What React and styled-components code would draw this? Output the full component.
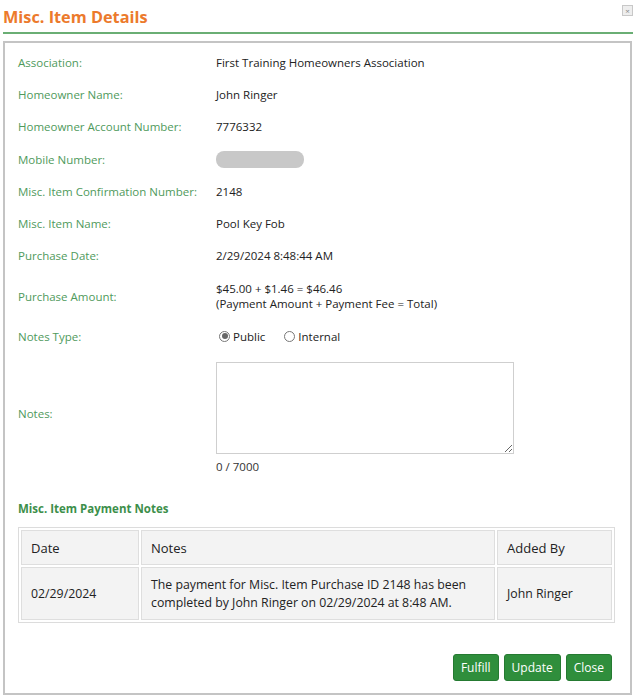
import React, { useState } from "react";
import styled, { createGlobalStyle } from "styled-components";

const GlobalStyle = createGlobalStyle`
  body {
    margin: 0;
    background: #fff;
    font-family: "Open Sans", "Noto Sans", sans-serif;
    font-size: 11.5px;
    color: #222;
  }
`;

const Dialog = styled.div`
  width: 635px;
  height: 697px;
  box-sizing: border-box;
  padding: 0 2px 2px 3px;
  display: flex;
  flex-direction: column;
`;

const TitleBar = styled.div`
  display: flex;
  align-items: flex-start;
  justify-content: space-between;
  height: 34px;
  border-bottom: 2px solid #6aae74;
  box-sizing: border-box;
`;

const Title = styled.h1`
  margin: 6px 0 0 0;
  font-size: 16.3px;
  font-weight: 700;
  color: #ec7a2c;
`;

const CloseIcon = styled.span`
  margin-top: 5px;
  width: 9px;
  height: 9px;
  border: 1px solid #c8c8c8;
  background: #eee;
  color: #888;
  font-size: 8px;
  line-height: 9px;
  text-align: center;
`;

const Panel = styled.div`
  margin-top: 7px;
  margin-right: 1px;
  flex: 1;
  border: 2px solid #c4c4c4;
  padding: 3px 17px 12px 13px;
  display: flex;
  flex-direction: column;
`;

const Row = styled.div`
  display: grid;
  grid-template-columns: 198px 1fr;
  align-items: center;
  min-height: ${(p) => p.$h || 32.3}px;
`;

const Label = styled.div`
  color: #4f9a5c;
`;

const Value = styled.div`
  color: #222;
  line-height: 15px;
`;

const Blur = styled.div`
  width: 88px;
  height: 17px;
  border-radius: 8px;
  background: #c8c8c8;
`;

const Radios = styled.div`
  display: flex;
  align-items: center;
  gap: 19px;
  margin-left: 3px;
`;

const RadioOpt = styled.label`
  display: flex;
  align-items: center;
  gap: 3px;
  color: #222;
`;

const Dot = styled.span`
  width: 11px;
  height: 11px;
  border-radius: 50%;
  border: 1px solid #777;
  box-sizing: border-box;
  position: relative;
  display: inline-block;
  background: #fff;
  &::after {
    content: "";
    display: ${(p) => (p.$on ? "block" : "none")};
    position: absolute;
    inset: 1.5px;
    border-radius: 50%;
    background: #666;
  }
`;

const NotesBlock = styled.div`
  display: flex;
  flex-direction: column;
  gap: 5px;
  padding-top: 10px;
`;

const Textarea = styled.textarea`
  width: 298px;
  height: 92px;
  box-sizing: border-box;
  border: 1px solid #cfcfcf;
  font-family: inherit;
  font-size: 12px;
  margin: 0;
`;

const Counter = styled.div`
  color: #333;
`;

const SectionTitle = styled.div`
  margin-top: 27px;
  font-weight: 700;
  color: #3d8f4b;
`;

const Table = styled.table`
  margin-top: 11px;
  width: 597px;
  border: 1px solid #dcdcdc;
  border-collapse: separate;
  border-spacing: 2px;
  font-size: 12px;
`;

const Th = styled.th`
  text-align: left;
  font-weight: 500;
  font-size: 13px;
  background: #f3f3f3;
  border: 1px solid #dedede;
  padding: 0 9px;
  height: 33px;
  width: ${(p) => p.$w}px;
`;

const Td = styled.td`
  background: #f3f3f3;
  border: 1px solid #dedede;
  padding: 0 9px;
  height: 51px;
  line-height: 18px;
  font-size: 12.3px;
`;

const Footer = styled.div`
  margin-top: auto;
  display: flex;
  justify-content: flex-end;
  gap: 5px;
  padding-right: 1px;
`;

const Button = styled.button`
  background: #2f8e3c;
  color: #fff;
  border: 1px solid #257a31;
  border-radius: 3px;
  font-family: inherit;
  font-size: 12px;
  height: 27px;
  padding: 0 7px;
`;

const fields = [
  ["Association:", "First Training Homeowners Association"],
  ["Homeowner Name:", "John Ringer"],
  ["Homeowner Account Number:", "7776332"],
  ["Mobile Number:", null],
  ["Misc. Item Confirmation Number:", "2148"],
  ["Misc. Item Name:", "Pool Key Fob"],
  ["Purchase Date:", "2/29/2024 8:48:44 AM"],
];

export default function App() {
  const [type, setType] = useState("public");
  const [notes, setNotes] = useState("");

  return (
    <>
      <GlobalStyle />
      <Dialog>
        <TitleBar>
          <Title>Misc. Item Details</Title>
          <CloseIcon>×</CloseIcon>
        </TitleBar>
        <Panel>
          {fields.map(([label, value]) => (
            <Row key={label}>
              <Label>{label}</Label>
              {value === null ? <Blur /> : <Value>{value}</Value>}
            </Row>
          ))}
          <Row $h={48}>
            <Label>Purchase Amount:</Label>
            <Value>
              $45.00 + $1.46 = $46.46
              <br />
              (Payment Amount + Payment Fee = Total)
            </Value>
          </Row>
          <Row>
            <Label>Notes Type:</Label>
            <Radios>
              <RadioOpt onClick={() => setType("public")}>
                <Dot $on={type === "public"} />
                Public
              </RadioOpt>
              <RadioOpt onClick={() => setType("internal")}>
                <Dot $on={type === "internal"} />
                Internal
              </RadioOpt>
            </Radios>
          </Row>
          <Row>
            <Label>Notes:</Label>
            <NotesBlock>
              <Textarea value={notes} onChange={(e) => setNotes(e.target.value)} />
              <Counter>{notes.length} / 7000</Counter>
            </NotesBlock>
          </Row>
          <SectionTitle>Misc. Item Payment Notes</SectionTitle>
          <Table>
            <thead>
              <tr>
                <Th $w={98}>Date</Th>
                <Th $w={334}>Notes</Th>
                <Th>Added By</Th>
              </tr>
            </thead>
            <tbody>
              <tr>
                <Td>02/29/2024</Td>
                <Td>
                  The payment for Misc. Item Purchase ID 2148 has been completed by John Ringer on
                  02/29/2024 at 8:48 AM.
                </Td>
                <Td>John Ringer</Td>
              </tr>
            </tbody>
          </Table>
          <Footer>
            <Button>Fulfill</Button>
            <Button>Update</Button>
            <Button>Close</Button>
          </Footer>
        </Panel>
      </Dialog>
    </>
  );
}
